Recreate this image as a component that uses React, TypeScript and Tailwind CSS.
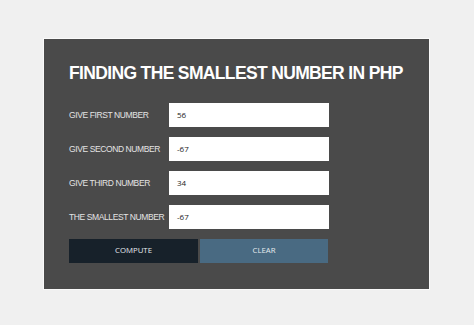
import { useState } from 'react';

const rows = [
    { label: 'GIVE FIRST NUMBER', value: '56' },
    { label: 'GIVE SECOND NUMBER', value: '-67' },
    { label: 'GIVE THIRD NUMBER', value: '34' },
    { label: 'THE SMALLEST NUMBER', value: '-67' },
];

export default function App() {
    const [values] = useState(rows);

    return (
        <div className="w-[474px] h-[325px] bg-[#f0f0f0] pt-[38px] pl-[43px] font-['Liberation_Sans',Arial,sans-serif]">
            <div className="w-[387px] h-[252px] bg-[#4a4a4a] border border-[#fafafa] pl-[25px] pt-[24px]">
                <h1 className="text-white font-bold text-[17.5px] leading-[20px] tracking-[-0.65px] whitespace-nowrap">
                    FINDING THE SMALLEST NUMBER IN PHP
                </h1>

                {/* form rows */}
                <div className="mt-[20px] flex flex-col gap-[9.7px]">
                    {values.map((row) => (
                        <div key={row.label} className="flex items-center">
                            <span className="w-[100px] text-[8.5px] text-[#e4e4e4] tracking-[-0.4px] whitespace-nowrap">
                                {row.label}
                            </span>
                            <div className="w-[160px] h-[24.3px] bg-white flex items-center pl-[8px] text-[8px] text-[#222] font-['Open_Sans',sans-serif]">
                                {row.value}
                            </div>
                        </div>
                    ))}
                </div>

                <div className="mt-[9.5px] flex gap-[2px] font-['Open_Sans',sans-serif]">
                    <button className="w-[129px] h-[24.3px] bg-[#17212a] text-[#e6eaee] text-[7.8px]">
                        COMPUTE
                    </button>
                    <button className="w-[128px] h-[24.3px] bg-[#496a82] text-[#e6eaee] text-[7.8px]">
                        CLEAR
                    </button>
                </div>
            </div>
        </div>
    );
}
